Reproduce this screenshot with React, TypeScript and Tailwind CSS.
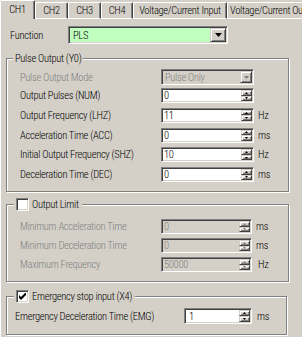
import React from "react";

const FONT = "font-['Roboto_Condensed','Liberation_Sans',Arial,sans-serif]";

function Arrow({ dir, color, w = 5, h = 3 }: { dir: "up" | "down"; color: string; w?: number; h?: number }) {
  const pts = dir === "up" ? `0,${h} ${w / 2},0 ${w},${h}` : `0,0 ${w / 2},${h} ${w},0`;
  return (
    <svg width={w} height={h} viewBox={`0 0 ${w} ${h}`} className="block">
      <polygon points={pts} fill={color} />
    </svg>
  );
}

function SpinHalf({ dir, disabled }: { dir: "up" | "down"; disabled?: boolean }) {
  return (
    <div className="flex-1 flex items-center justify-center bg-[#d4d0c8] border border-t-[#d4d0c8] border-l-[#d4d0c8] border-b-[#404040] border-r-[#404040] shadow-[inset_1px_1px_0_#fff,inset_-1px_-1px_0_#808080]">
      <Arrow dir={dir} color={disabled ? "#808080" : "#000"} w={3} h={2} />
    </div>
  );
}

function Edit({
  value,
  widthClass,
  disabled,
  textPad = "pl-[1px]",
}: {
  value: string;
  widthClass: string;
  disabled?: boolean;
  textPad?: string;
}) {
  return (
    <div
      className={`${widthClass} flex p-px border border-t-[#808080] border-l-[#808080] border-b-white border-r-white shadow-[inset_1px_1px_0_#404040,inset_-1px_-1px_0_#d4d0c8] ${
        disabled ? "bg-[#d4d0c8] text-[#808080]" : "bg-white text-black"
      }`}
    >
      <div className={`flex-1 flex items-center leading-[11px] ${textPad}`}>{value}</div>
      <div className="w-[11px] flex flex-col">
        <SpinHalf dir="up" disabled={disabled} />
        <SpinHalf dir="down" disabled={disabled} />
      </div>
    </div>
  );
}

function Row({
  label,
  labelClass = "w-[141px]",
  disabled,
  unit,
  unitClass = "ml-[4px]",
  children,
}: {
  label: string;
  labelClass?: string;
  disabled?: boolean;
  unit?: string;
  unitClass?: string;
  children: React.ReactNode;
}) {
  return (
    <div className="flex items-center">
      <div className={`${labelClass} leading-[13px] whitespace-nowrap ${disabled ? "text-[#808080]" : "text-black"}`}>
        {label}
      </div>
      {children}
      {unit && <div className={`${unitClass} leading-[13px] text-black`}>{unit}</div>}
    </div>
  );
}

function CheckBox({ checked }: { checked?: boolean }) {
  return (
    <div className="w-[13px] h-[13px] shrink-0 bg-white flex items-center justify-center border border-t-[#808080] border-l-[#808080] border-b-white border-r-white shadow-[inset_1px_1px_0_#404040,inset_-1px_-1px_0_#d4d0c8]">
      {checked && (
        <svg width="7" height="7" viewBox="0 0 7 7" className="block">
          <polygon points="0,2 2,4 7,-1 7,2 2,7 0,5" fill="#000" />
        </svg>
      )}
    </div>
  );
}

const groupCls =
  "ml-[6px] border border-[#808080] shadow-[inset_1px_1px_0_#fff,1px_1px_0_#fff] min-w-0 p-0 m-0";

const tabCls =
  "h-[17px] shrink-0 border border-t-white border-l-white border-b-white border-r-[#404040] shadow-[inset_-1px_0_0_#808080] rounded-t-[2px] flex items-center leading-[13px] whitespace-nowrap";

export default function App() {
  return (
    <div
      className={`w-[302px] h-[337px] overflow-hidden bg-[#d4d0c8] text-[10.5px] font-light tracking-[-0.3px] text-black ${FONT}`}
    >
      {/* Tab strip */}
      <div className="flex items-end h-[19px]">
        <div className="h-[19px] w-[35px] shrink-0 bg-[#d4d0c8] border-l border-t border-r border-l-white border-t-white border-r-[#404040] shadow-[inset_-1px_0_0_#808080] rounded-t-[2px] flex justify-center pt-[2px] leading-[13px] z-10">
          CH1
        </div>
        <div className={`${tabCls} w-[33px] justify-center`}>CH2</div>
        <div className={`${tabCls} w-[33px] justify-center`}>CH3</div>
        <div className={`${tabCls} w-[32px] justify-center`}>CH4</div>
        <div className={`${tabCls} w-[94px] justify-center`}>Voltage/Current Input</div>
        <div className={`${tabCls} w-[100px] pl-[2px]`}>Voltage/Current Output</div>
      </div>

      {/* Panel */}
      <div className="h-[318px] shadow-[inset_1px_0_0_#fff] pt-[7px]">
        {/* Function row */}
        <div className="flex items-center h-[18px]">
          <div className="w-[68px] pl-[10px] leading-[13px]">Function</div>
          <div className="w-[160px] h-[18px] flex p-px bg-[#c0ffc0] border border-t-[#808080] border-l-[#808080] border-b-white border-r-white shadow-[inset_1px_1px_0_#404040,inset_-1px_-1px_0_#d4d0c8]">
            <div className="flex-1 flex items-center pl-[3px] leading-[13px]">PLS</div>
            <div className="w-[16px] flex items-center justify-center bg-[#d4d0c8] border border-t-[#d4d0c8] border-l-[#d4d0c8] border-b-[#404040] border-r-[#404040] shadow-[inset_1px_1px_0_#fff,inset_-1px_-1px_0_#808080]">
              <Arrow dir="down" color="#000" w={7} h={4} />
            </div>
          </div>
        </div>

        {/* Pulse Output group */}
        <fieldset className={`${groupCls} w-[283px] mt-[8px]`}>
          <legend className="ml-[6px] px-[2px] leading-[13px] h-[13px] bg-[#d4d0c8]">Pulse Output (Y0)</legend>
          <div className="pl-[13px] pt-[4px] pb-[9px] flex flex-col">
            <Row label="Pulse Output Mode" disabled>
              <div className="w-[93px] h-[16px] flex p-px bg-[#d4d0c8] text-[#808080] border border-t-[#808080] border-l-[#808080] border-b-white border-r-white shadow-[inset_1px_1px_0_#404040,inset_-1px_-1px_0_#d4d0c8]">
                <div className="flex-1 flex items-center pl-[2px] leading-[13px]">Pulse Only</div>
                <div className="w-[12px] flex items-center justify-center bg-[#d4d0c8] border border-t-[#d4d0c8] border-l-[#d4d0c8] border-b-[#404040] border-r-[#404040] shadow-[inset_1px_1px_0_#fff,inset_-1px_-1px_0_#808080]">
                  <Arrow dir="down" color="#808080" w={5} h={3} />
                </div>
              </div>
            </Row>
            <div className="mt-[3px] flex flex-col gap-[4.75px]">
              <Row label="Output Pulses (NUM)">
                <Edit value="0" widthClass="w-[93px] h-[15px]" />
              </Row>
              <Row label="Output Frequency (LHZ)" unit="Hz">
                <Edit value="11" widthClass="w-[93px] h-[15px]" />
              </Row>
              <Row label="Acceleration Time (ACC)" unit="ms">
                <Edit value="0" widthClass="w-[93px] h-[15px]" />
              </Row>
              <Row label="Initial Output Frequency (SHZ)" unit="Hz">
                <Edit value="10" widthClass="w-[93px] h-[15px]" />
              </Row>
              <Row label="Deceleration Time (DEC)" unit="ms">
                <Edit value="0" widthClass="w-[93px] h-[15px]" />
              </Row>
            </div>
          </div>
        </fieldset>

        {/* Output Limit group */}
        <fieldset className={`${groupCls} w-[283px] mt-[6px]`}>
          <legend className="ml-[7px] px-[2px] h-[13px] bg-[#d4d0c8] flex items-center">
            <CheckBox />
            <span className="ml-[3px] pr-[1px] leading-[13px]">Output Limit</span>
          </legend>
          <div className="pl-[13px] pt-[8px] pb-[9px] flex flex-col gap-[4px]">
            <Row label="Minimum Acceleration Time" disabled unit="ms">
              <Edit value="0" widthClass="w-[91px] h-[15px]" disabled />
            </Row>
            <Row label="Minimum Deceleration Time" disabled unit="ms">
              <Edit value="0" widthClass="w-[91px] h-[15px]" disabled />
            </Row>
            <Row label="Maximum Frequency" disabled unit="Hz" unitClass="ml-[6px]">
              <Edit value="50000" widthClass="w-[91px] h-[15px]" disabled />
            </Row>
          </div>
        </fieldset>

        {/* Emergency group */}
        <fieldset className={`${groupCls} w-[281px] mt-[8px]`}>
          <legend className="ml-[7px] px-[2px] h-[13px] bg-[#d4d0c8] flex items-center">
            <CheckBox checked />
            <span className="ml-[3px] pr-[1px] leading-[13px]">Emergency stop input (X4)</span>
          </legend>
          <div className="pl-[8px] pt-[5px] pb-[10px]">
            <Row label="Emergency Deceleration Time (EMG)" labelClass="w-[169px]" unit="ms" unitClass="ml-[5px]">
              <Edit value="1" widthClass="w-[68px] h-[16px]" textPad="pl-[3px]" />
            </Row>
          </div>
        </fieldset>
      </div>
    </div>
  );
}
